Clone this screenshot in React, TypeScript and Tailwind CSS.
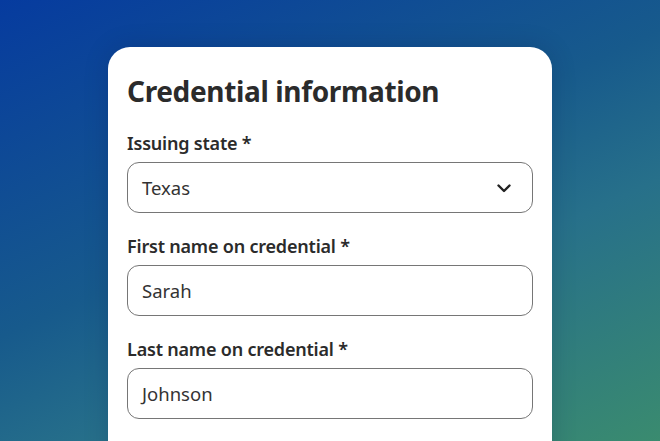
const fieldClass =
  'h-[51px] w-full rounded-[12px] border border-[#767676] bg-white px-[14px] flex items-center text-[18.5px] text-[#333333]'

function Label({ children }: { children: string }) {
  return (
    <div className="text-[18px] leading-[24px] font-semibold tracking-[-0.2px] text-[#2b2b2b]">
      {children} *
    </div>
  )
}

export default function App() {
  return (
    <div
      className="h-[441px] w-full overflow-hidden bg-[linear-gradient(155deg,#063b9f_0%,#175a8c_45%,#27708a_65%,#3a8b6f_100%)]"
      style={{ fontFamily: '"Noto Sans", "Open Sans", sans-serif' }}
    >
      <div className="mx-auto mt-[47px] w-[444px] h-[420px] rounded-t-[22px] bg-white px-[19px] pt-[26px] shadow-[0_0_24px_rgba(0,20,60,0.18)]">
        <h1 className="text-[28px] leading-[36px] font-bold tracking-[-0.35px] text-[#2b2b2b]">Credential information</h1>

        <div className="mt-[22px] flex flex-col gap-[7px]">
          <Label>Issuing state</Label>
          <div className={fieldClass + ' justify-between'}>
            <span>Texas</span>
            <svg width="16" height="16" viewBox="0 0 16 16" className="mr-[6px]">
              <polyline
                points="2.5,5.5 8,11 13.5,5.5"
                fill="none"
                stroke="#222"
                strokeWidth="2.4"
                strokeLinecap="round"
                strokeLinejoin="round"
              />
            </svg>
          </div>
        </div>

        <div className="mt-[21px] flex flex-col gap-[7px]">
          <Label>First name on credential</Label>
          <div className={fieldClass}>Sarah</div>
        </div>

        <div className="mt-[21px] flex flex-col gap-[7px]">
          <Label>Last name on credential</Label>
          <div className={fieldClass}>Johnson</div>
        </div>
      </div>
    </div>
  )
}
